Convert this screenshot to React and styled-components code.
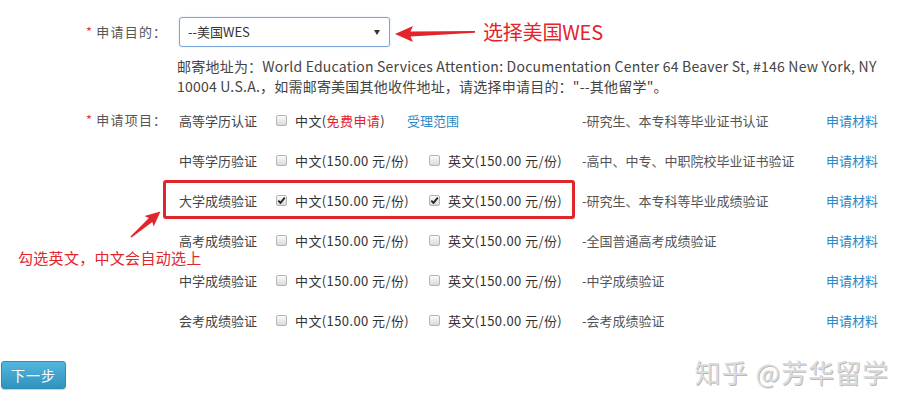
import React from "react";
import styled, { createGlobalStyle, css } from "styled-components";

const GlobalStyle = createGlobalStyle`
  html, body {
    margin: 0;
    padding: 0;
    background: #fff;
  }
  body {
    font-family: "Noto Sans CJK SC", "Noto Sans", sans-serif;
    color: #333;
  }
`;

const Page = styled.div`
  position: relative;
  width: 911px;
  height: 404px;
  padding-top: 17px;
  box-sizing: border-box;
  overflow: hidden;
`;

const FieldRow = styled.div`
  display: grid;
  grid-template-columns: 179px 1fr;
  align-items: center;
`;

const Label = styled.div`
  padding-left: 86px;
  font-size: 13px;
  letter-spacing: 1.2px;
  color: #555;
  line-height: ${(p) => p.$line || 30}px;
  white-space: nowrap;
`;

const Star = styled.span`
  color: #e23b3b;
  margin-right: 3px;
`;

const SelectLine = styled.div`
  display: flex;
  align-items: center;
`;

const Select = styled.div`
  position: relative;
  width: 211px;
  height: 30px;
  box-sizing: border-box;
  border: 1px solid #7aa7d9;
  border-radius: 3px;
  padding-left: 8px;
  font-size: 13px;
  line-height: 28px;
  color: #333;
  box-shadow: 0 0 2px rgba(90, 140, 210, 0.35);

  &::after {
    content: "";
    position: absolute;
    right: 9px;
    top: 12px;
    border-left: 3px solid transparent;
    border-right: 3px solid transparent;
    border-top: 5px solid #333;
  }
`;

const Callout = styled.span`
  font-size: 20px;
  color: #e4242b;
  line-height: 24px;
  margin-left: 4px;
  letter-spacing: -0.2px;
`;

const Address = styled.p`
  margin: 9px 0 0 177px;
  font-size: 14px;
  line-height: 20px;
  letter-spacing: 0.22px;
  color: #444;
  white-space: nowrap;
`;

const Items = styled.div`
  display: grid;
  grid-template-columns: 179px 1fr;
  margin-top: 4px;
`;

const Rows = styled.div`
  display: flex;
  flex-direction: column;
`;

const Row = styled.div`
  position: relative;
  display: flex;
  align-items: center;
  height: 40px;
  font-size: 13px;
  white-space: nowrap;

  ${(p) =>
    p.$highlight &&
    css`
      &::after {
        content: "";
        position: absolute;
        left: -16px;
        top: 0;
        width: 412px;
        height: 39px;
        box-sizing: border-box;
        border: 3px solid #e0262a;
        border-radius: 3px;
      }
    `}
`;

const Name = styled.span`
  width: 97px;
  color: #444;
`;

const Option = styled.span`
  display: flex;
  align-items: center;
  gap: 8px;
  width: ${(p) => p.$w || 153}px;
  color: #333;
  letter-spacing: 0.4px;
`;

const Free = styled.span`
  color: #e4242b;
`;

const Desc = styled.span`
  width: 244px;
  color: #555;
`;

const Link = styled.a`
  color: #2b87c6;
  text-decoration: none;
  width: ${(p) => (p.$w ? `${p.$w}px` : "auto")};
`;

const Box = styled.span`
  display: inline-flex;
  align-items: center;
  justify-content: center;
  width: 11px;
  height: 11px;
  box-sizing: border-box;
  border: 1px solid #b3b3b3;
  border-radius: 2px;
  background: linear-gradient(#fbfbfb, #dadada);
`;

const Footer = styled.div`
  display: flex;
  align-items: center;
  justify-content: space-between;
  margin-top: 19px;
  padding: 0 22px 0 1px;
`;

const NextButton = styled.button`
  width: 65px;
  height: 28px;
  border: 1px solid #2f8db8;
  border-radius: 3px;
  background: linear-gradient(#52b6dc, #2f93bf);
  color: #fff;
  font-family: inherit;
  font-size: 14px;
  letter-spacing: 1px;
  box-shadow: 0 1px 1px rgba(0, 0, 0, 0.2);
`;

const Watermark = styled.span`
  font-size: 26px;
  color: #dcdcdc;
  letter-spacing: 1px;
  margin-top: -6px;
  text-shadow: 1px 1px 0 rgba(0, 0, 0, 0.28);
`;

const SideNote = styled.span`
  position: absolute;
  left: 18px;
  top: 247px;
  font-size: 15px;
  letter-spacing: 0.3px;
  color: #e4242b;
  line-height: 22px;
`;

const SideArrow = styled.svg`
  position: absolute;
  left: 122px;
  top: 204px;
`;

function Check({ on }) {
  return (
    <Box>
      {on ? (
        <svg width="9" height="9" viewBox="0 0 9 9">
          <path d="M1.3 4.6 L3.5 6.9 L7.8 1.6" fill="none" stroke="#222" strokeWidth="1.8" />
        </svg>
      ) : null}
    </Box>
  );
}

const price = "(150.00 元/份)";

const items = [
  { name: "中等学历验证", desc: "-高中、中专、中职院校毕业证书验证" },
  { name: "大学成绩验证", desc: "-研究生、本专科等毕业成绩验证", checked: true },
  { name: "高考成绩验证", desc: "-全国普通高考成绩验证" },
  { name: "中学成绩验证", desc: "-中学成绩验证" },
  { name: "会考成绩验证", desc: "-会考成绩验证" },
];

export default function App() {
  return (
    <Page>
      <GlobalStyle />

      <FieldRow>
        <Label>
          <Star>*</Star>申请目的：
        </Label>
        <SelectLine>
          <Select>--美国WES</Select>
          <svg width="84" height="20" viewBox="0 0 84 20" style={{ marginLeft: 5 }}>
            <polygon
              points="0,12 18,4 15.5,9.5 80,9 80,10.8 15.5,14.5 18,20"
              fill="#e4242b"
            />
          </svg>
          <Callout>选择美国WES</Callout>
        </SelectLine>
      </FieldRow>

      <Address>
        邮寄地址为：World Education Services Attention: Documentation Center 64 Beaver St, #146 New York, NY
        <br />
        10004 U.S.A.，如需邮寄美国其他收件地址，请选择申请目的："--其他留学"。
      </Address>

      <Items>
        <Label $line={40}>
          <Star>*</Star>申请项目：
        </Label>
        <Rows>
          <Row>
            <Name>高等学历认证</Name>
            <Option $w={131}>
              <Check />
              <span>
                中文(<Free>免费申请</Free>)
              </span>
            </Option>
            <Link href="#" $w={175}>
              受理范围
            </Link>
            <Desc>-研究生、本专科等毕业证书认证</Desc>
            <Link href="#">申请材料</Link>
          </Row>
          {items.map((item) => (
            <Row key={item.name} $highlight={item.checked}>
              <Name>{item.name}</Name>
              <Option>
                <Check on={item.checked} />
                <span>中文{price}</span>
              </Option>
              <Option>
                <Check on={item.checked} />
                <span>英文{price}</span>
              </Option>
              <Desc>{item.desc}</Desc>
              <Link href="#">申请材料</Link>
            </Row>
          ))}
        </Rows>
      </Items>

      <Footer>
        <NextButton type="button">下一步</NextButton>
        <Watermark>知乎 @芳华留学</Watermark>
      </Footer>

      <SideArrow width="44" height="40" viewBox="0 0 44 40">
        <g transform="translate(9 33) rotate(-41)">
          <polygon points="0,-0.8 26,-2.6 24,-7 39,0 24,7 26,2.6 0,0.8" fill="#e4242b" />
        </g>
      </SideArrow>
      <SideNote>勾选英文，中文会自动选上</SideNote>
    </Page>
  );
}
